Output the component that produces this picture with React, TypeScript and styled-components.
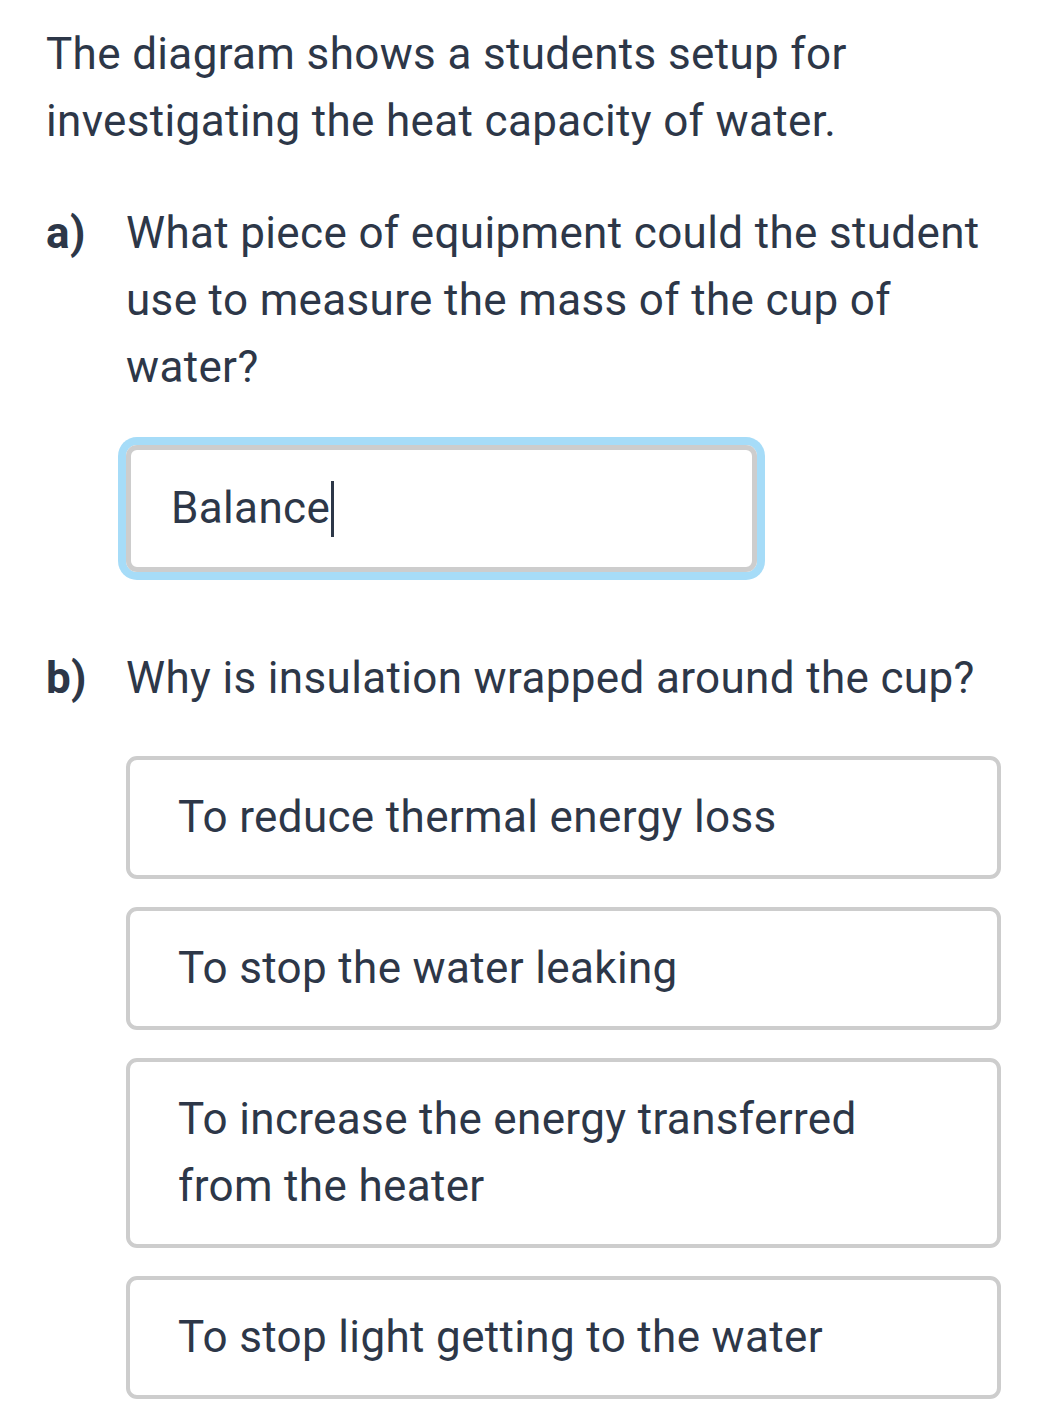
import React from "react"
import styled, { createGlobalStyle } from "styled-components"

const textColor = "#2d3748"
const borderColor = "#cdcdcd"

const GlobalStyle = createGlobalStyle`
    html, body {
        margin: 0;
        padding: 0;
        background: #ffffff;
    }
    body {
        font-family: Roboto, "Noto Sans", sans-serif;
        color: ${textColor};
    }
`

const options = [
    "To reduce thermal energy loss",
    "To stop the water leaking",
    "To increase the energy transferred from the heater",
    "To stop light getting to the water",
]

export default function App() {
    return (
        <>
            <GlobalStyle />
            <Page>
                <Intro>The diagram shows a students setup for investigating the heat capacity of water.</Intro>

                <Question>
                    <Label>a)</Label>
                    <Body>
                        <Prompt>What piece of equipment could the student use to measure the mass of the cup of water?</Prompt>
                        <AnswerBox>
                            Balance<Caret />
                        </AnswerBox>
                    </Body>
                </Question>

                <Question className="second">
                    <Label>b)</Label>
                    <Body>
                        <Prompt>Why is insulation wrapped around the cup?</Prompt>
                        <OptionList>
                            {options.map((option, index) =>
                                <Option key={index}>{option}</Option>
                            )}
                        </OptionList>
                    </Body>
                </Question>
            </Page>
        </>
    )
}

const Page = styled.div`
    width: 1051px;
    min-height: 1413px;
    box-sizing: border-box;
    padding: 21px 50px 0 46px;
    font-size: 44px;
    line-height: 67px;
    letter-spacing: 0.35px;

    .second {
        margin-top: 73px;
    }
`

const Intro = styled.p`
    margin: 0 0 45px;
    padding-right: 150px;
`

const Question = styled.div`
    display: flex;
`

const Label = styled.div`
    width: 80px;
    flex-shrink: 0;
    font-weight: 700;
`

const Body = styled.div`
    flex: 1;
    display: flex;
    flex-direction: column;
`

const Prompt = styled.p`
    margin: 0;
`

const AnswerBox = styled.div`
    margin-top: 44px;
    width: 631px;
    height: 127px;
    box-sizing: border-box;
    padding: 0 40px;
    display: flex;
    align-items: center;
    border: 5px solid ${borderColor};
    border-radius: 11px;
    box-shadow: 0 0 0 8px #a6dcf8;
`

const Caret = styled.span`
    display: inline-block;
    width: 3px;
    height: 56px;
    background: ${textColor};
    margin-left: 1px;
`

const OptionList = styled.div`
    margin-top: 44px;
    display: flex;
    flex-direction: column;
    gap: 28px;
`

const Option = styled.div`
    box-sizing: border-box;
    padding: 24px 90px 24px 48px;
    border: 4px solid ${borderColor};
    border-radius: 11px;
`
